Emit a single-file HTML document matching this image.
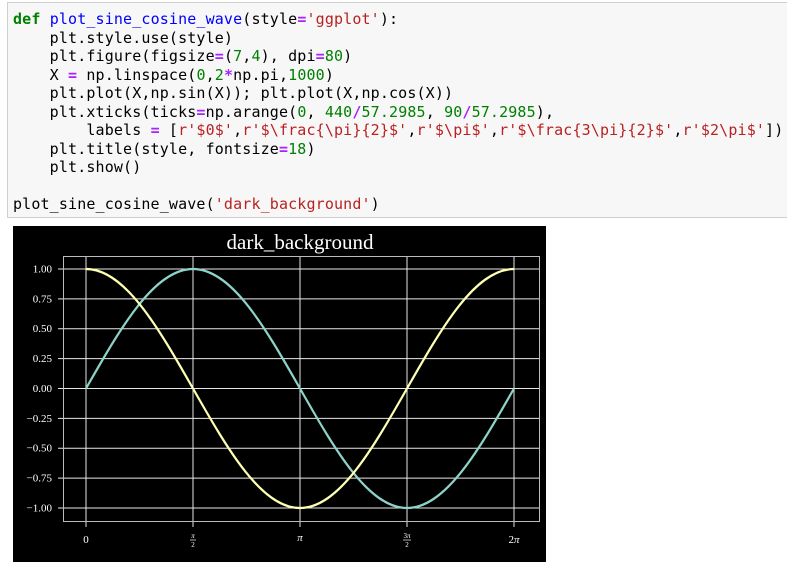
<!DOCTYPE html>
<html><head><meta charset="utf-8"><style>
body{margin:0;background:#fff;width:787px;height:574px;overflow:hidden;position:relative}
.cell{position:absolute;left:7px;top:2px;width:786px;height:216px;background:#f7f7f7;border:1px solid #cfcfcf;box-sizing:border-box}
pre{margin:0;position:absolute;left:13px;top:10px;font-family:"DejaVu Sans Mono","Liberation Mono",monospace;font-size:15px;letter-spacing:0.14px;line-height:18.5px;color:#000}
.k{color:#008000;font-weight:bold}.f{color:#0000ff}.s{color:#ba2121}.n{color:#008000}.o{color:#aa22ff;font-weight:bold}
svg{position:absolute;left:0;top:0}
</style></head><body>
<div class="cell"></div>
<pre><span class="k">def</span> <span class="f">plot_sine_cosine_wave</span>(style<span class="o">=</span><span class="s">'ggplot'</span>):
    plt.style.use(style)
    plt.figure(figsize<span class="o">=</span>(<span class="n">7</span>,<span class="n">4</span>), dpi<span class="o">=</span><span class="n">80</span>)
    X <span class="o">=</span> np.linspace(<span class="n">0</span>,<span class="n">2</span><span class="o">*</span>np.pi,<span class="n">1000</span>)
    plt.plot(X,np.sin(X)); plt.plot(X,np.cos(X))
    plt.xticks(ticks<span class="o">=</span>np.arange(<span class="n">0</span>, <span class="n">440</span><span class="o">/</span><span class="n">57.2985</span>, <span class="n">90</span><span class="o">/</span><span class="n">57.2985</span>),
        labels <span class="o">=</span> [<span class="s">r'$0$'</span>,<span class="s">r'$\frac{\pi}{2}$'</span>,<span class="s">r'$\pi$'</span>,<span class="s">r'$\frac{3\pi}{2}$'</span>,<span class="s">r'$2\pi$'</span>])
    plt.title(style, fontsize<span class="o">=</span><span class="n">18</span>)
    plt.show()

plot_sine_cosine_wave(<span class="s">'dark_background'</span>)</pre>
<svg width="787" height="574" viewBox="0 0 787 574">
<rect x="13" y="226" width="533" height="336" fill="#000"/>
<text x="300" y="249" text-anchor="middle" fill="#fff" font-family="Liberation Serif,serif" font-size="21">dark_background</text>
<g stroke="#e8e8e8" stroke-width="1">
<line x1="63" x2="539" y1="269" y2="269"/><line x1="63" x2="539" y1="298.9" y2="298.9"/><line x1="63" x2="539" y1="328.75" y2="328.75"/><line x1="63" x2="539" y1="358.6" y2="358.6"/><line x1="63" x2="539" y1="388.5" y2="388.5"/><line x1="63" x2="539" y1="418.4" y2="418.4"/><line x1="63" x2="539" y1="448.25" y2="448.25"/><line x1="63" x2="539" y1="478.1" y2="478.1"/><line x1="63" x2="539" y1="508" y2="508"/>
<line x1="58" x2="63" y1="269" y2="269"/><line x1="58" x2="63" y1="298.9" y2="298.9"/><line x1="58" x2="63" y1="328.75" y2="328.75"/><line x1="58" x2="63" y1="358.6" y2="358.6"/><line x1="58" x2="63" y1="388.5" y2="388.5"/><line x1="58" x2="63" y1="418.4" y2="418.4"/><line x1="58" x2="63" y1="448.25" y2="448.25"/><line x1="58" x2="63" y1="478.1" y2="478.1"/><line x1="58" x2="63" y1="508" y2="508"/>
<line x1="86" x2="86" y1="256" y2="527"/><line x1="193" x2="193" y1="256" y2="527"/><line x1="300" x2="300" y1="256" y2="527"/><line x1="407" x2="407" y1="256" y2="527"/><line x1="514" x2="514" y1="256" y2="527"/>
</g>
<rect x="63.5" y="256.5" width="476" height="265" fill="none" stroke="#bbb" stroke-width="1"/>
<path d="M86 388.5 C120.9 327.3 154.3 269 193 269 C231.7 269 265.1 327.3 300 388.5 C334.9 449.7 368.3 508 407 508 C445.7 508 479.1 449.7 514 388.5" fill="none" stroke="#8dd3c7" stroke-width="2.2"/>
<path d="M86 269 C124.7 269 158.1 327.3 193 388.5 C227.9 449.7 261.3 508 300 508 C338.7 508 372.1 449.7 407 388.5 C441.9 327.3 475.3 269 514 269" fill="none" stroke="#feffb3" stroke-width="2.2"/>
<g fill="#fff" font-family="Liberation Serif,serif" font-size="11" text-anchor="end">
<text x="52" y="272.5">1.00</text><text x="52" y="302.4">0.75</text><text x="52" y="332.2">0.50</text><text x="52" y="362.1">0.25</text><text x="52" y="392">0.00</text><text x="52" y="421.9">−0.25</text><text x="52" y="451.7">−0.50</text><text x="52" y="481.6">−0.75</text><text x="52" y="511.5">−1.00</text>
</g>
<g fill="#fff" font-family="Liberation Serif,serif" font-size="11" text-anchor="middle">
<text x="86" y="543">0</text>
<text x="193" y="538" font-size="7" font-style="italic">π</text><line x1="190" x2="196" y1="540" y2="540" stroke="#fff" stroke-width="0.7"/><text x="193" y="547" font-size="7">2</text>
<text x="300" y="541" font-style="italic">π</text>
<text x="407" y="538" font-size="7">3<tspan font-style="italic">π</tspan></text><line x1="403" x2="411" y1="540" y2="540" stroke="#fff" stroke-width="0.7"/><text x="407" y="547" font-size="7">2</text>
<text x="514" y="543">2<tspan font-style="italic">π</tspan></text>
</g>
</svg>
</body></html>
